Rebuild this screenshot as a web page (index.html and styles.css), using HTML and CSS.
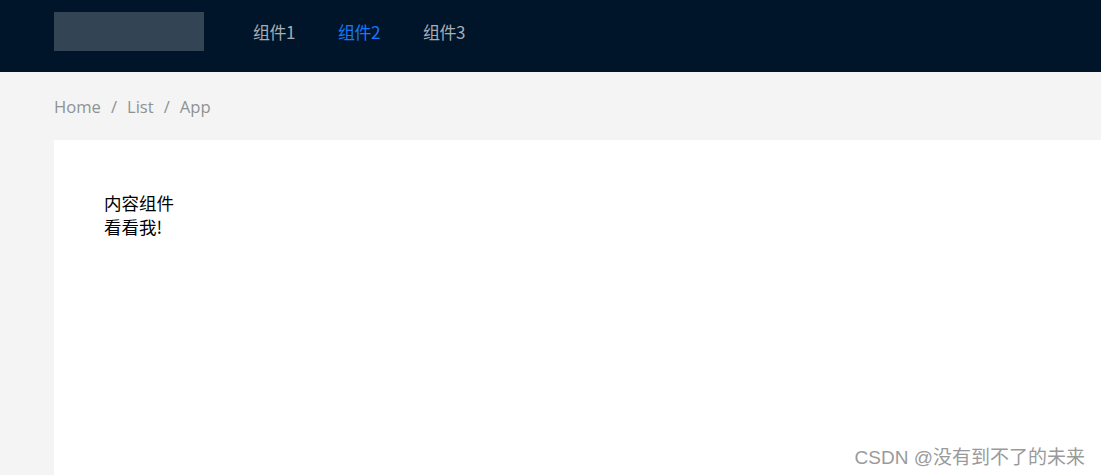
FILE: index.html
```html
<!DOCTYPE html>
<html lang="zh-CN">
<head>
<meta charset="utf-8">
<link rel="stylesheet" href="styles.css">
</head>
<body>
<div class="layout">
  <header class="header">
    <div class="logo"></div>
    <nav class="menu">
      <span class="menu-item">组件1</span>
      <span class="menu-item selected">组件2</span>
      <span class="menu-item">组件3</span>
    </nav>
  </header>
  <main class="main">
    <div class="breadcrumb">
      <span class="crumb">Home</span><span class="sep">/</span><span class="crumb">List</span><span class="sep">/</span><span class="crumb">App</span>
    </div>
    <div class="content">
      <div>内容组件</div>
      <div>看看我!</div>
    </div>
  </main>
  <div class="watermark">CSDN @没有到不了的未来</div>
</div>
</body>
</html>
```
FILE: styles.css
```css
html, body {
  margin: 0;
  padding: 0;
  height: 100%;
  overflow: hidden;
}
body {
  font-family: "Open Sans", "Noto Sans CJK SC", sans-serif;
  background: #f4f4f4;
}
.layout {
  position: relative;
  height: 100%;
  display: flex;
  flex-direction: column;
}
.header {
  height: 72px;
  box-sizing: border-box;
  padding-bottom: 9px;
  background: #001529;
  display: flex;
  align-items: center;
  padding-left: 54px;
  flex-shrink: 0;
}
.logo {
  width: 150px;
  height: 39px;
  background: #334454;
  margin-right: 28px;
}
.menu {
  display: flex;
  align-items: center;
  font-family: "Noto Sans CJK SC", sans-serif;
  font-size: 17px;
}
.menu-item {
  color: #a6adb4;
  padding: 0 21px;
  width: 43px;
  letter-spacing: -0.5px;
}
.menu-item.selected {
  color: #1677ff;
}
.main {
  flex: 1;
  display: flex;
  flex-direction: column;
  padding-left: 54px;
}
.breadcrumb {
  height: 68px;
  display: flex;
  align-items: center;
  padding-top: 1px;
  box-sizing: border-box;
  font-size: 16.6px;
  color: #8c9393;
}
.sep {
  margin: 0 10px;
}
.content {
  flex: 1;
  background: #ffffff;
  padding: 51px 50px;
  font-family: "Noto Sans CJK SC", sans-serif;
  font-size: 17.5px;
  line-height: 24px;
  color: #000000;
}
.watermark {
  position: absolute;
  right: 16px;
  bottom: 6px;
  font-family: "Liberation Sans", "Noto Sans CJK SC", sans-serif;
  font-size: 19px;
  color: #9a9a9a;
}
```
